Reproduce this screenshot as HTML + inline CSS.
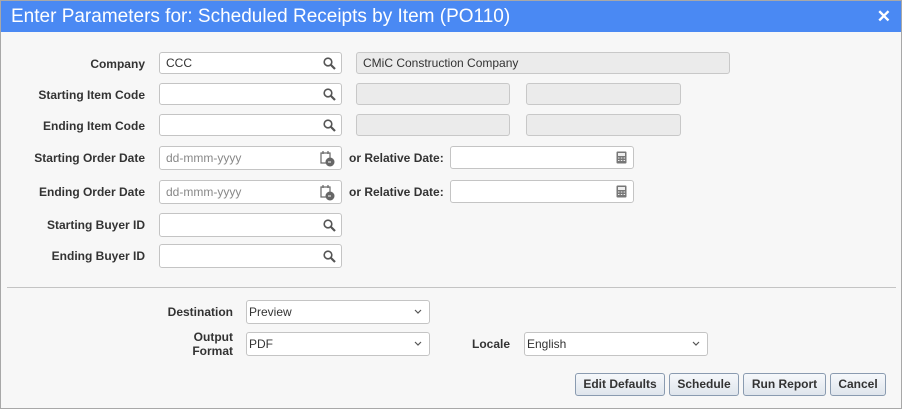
<!DOCTYPE html><html><head><style>
body{margin:0;width:902px;height:409px;overflow:hidden;font-family:"Liberation Sans",Arial,sans-serif;font-size:12px;color:#333}
.win{position:absolute;left:0;top:0;width:900px;height:407px;border:1px solid #a8a8a8;background:#f7f7f7}
.tb{position:absolute;left:0;top:0;width:900px;height:31px;background:#4a89f3;color:#fff;font-size:19px;line-height:31px;padding-left:10px;box-sizing:border-box}
.x{position:absolute;right:10px;top:0;font-size:17px;font-weight:bold}
.a{position:absolute}
.l{position:absolute;font-weight:bold;text-align:right;width:144px;left:0}
.i{position:absolute;height:22px;background:#fff;border:1px solid #c4c4c4;border-radius:3px;box-sizing:border-box;padding-left:6px;line-height:20px}
.g{background:#ebebeb;border-color:#c8c8c8}
.ph{color:#888}
.ic{position:absolute;right:5px;top:4px}
.b{position:absolute;top:372px;height:23px;border:1px solid #8a9bb0;border-radius:3px;background:linear-gradient(#f6f8fb,#dfe5ec);font-weight:bold;font-size:12px;text-align:center;line-height:21px;box-sizing:border-box}
.ch{position:absolute;right:7px;top:8px}
</style></head><body><div class="win">
<div class="tb">Enter Parameters for: Scheduled Receipts by Item (PO110)<span class="x">✕</span></div>
<svg width="0" height="0" style="position:absolute"><defs><g id="mg"><circle cx="5" cy="5" r="3.8" fill="none" stroke="#555" stroke-width="1.6"/><path d="M8 8l4 4" stroke="#555" stroke-width="2.2"/></g><g id="cal"><rect x="1" y="2" width="9" height="10" fill="none" stroke="#666" stroke-width="1.2"/><path d="M3 0v3M8 0v3" stroke="#666" stroke-width="1.2"/><circle cx="10" cy="11" r="4.5" fill="#666"/><path d="M8 11h3" stroke="#fff"/></g><g id="cc"><rect x="0.5" y="0.5" width="10" height="12" rx="1" fill="#777"/><rect x="2" y="2" width="7" height="3" fill="#eee"/><path d="M2 7h1.5M4.8 7h1.5M7.6 7h1.5M2 9.5h1.5M4.8 9.5h1.5M7.6 9.5h1.5" stroke="#eee"/></g><path id="chev" d="M1 1l3 3 3-3" fill="none" stroke="#555" stroke-width="1.2"/></defs></svg>
<div class="l" style="top:56px">Company</div>
<div class="i" style="left:158px;top:51px;width:183px">CCC<svg class="ic" width="13" height="13"><use href="#mg"/></svg></div>
<div class="i g" style="left:355px;top:51px;width:374px">CMiC Construction Company</div>
<div class="l" style="top:87px">Starting Item Code</div>
<div class="i" style="left:158px;top:82px;width:183px"><svg class="ic" width="13" height="13"><use href="#mg"/></svg></div>
<div class="i g" style="left:355px;top:82px;width:154px"></div><div class="i g" style="left:525px;top:82px;width:155px"></div>
<div class="l" style="top:118px">Ending Item Code</div>
<div class="i" style="left:158px;top:113px;width:183px"><svg class="ic" width="13" height="13"><use href="#mg"/></svg></div>
<div class="i g" style="left:355px;top:113px;width:154px"></div><div class="i g" style="left:525px;top:113px;width:155px"></div>
<div class="l" style="top:150px">Starting Order Date</div>
<div class="i ph" style="left:158px;top:145px;width:183px;height:24px;line-height:22px">dd-mmm-yyyy<svg class="ic" width="16" height="16" style="top:4px"><use href="#cal"/></svg></div>
<div class="a" style="left:348px;top:150px;font-weight:bold">or Relative Date:</div>
<div class="i" style="left:449px;top:145px;width:184px;height:23px"><svg class="ic" width="12" height="14"><use href="#cc"/></svg></div>
<div class="l" style="top:184px">Ending Order Date</div>
<div class="i ph" style="left:158px;top:179px;width:183px;height:24px;line-height:22px">dd-mmm-yyyy<svg class="ic" width="16" height="16" style="top:4px"><use href="#cal"/></svg></div>
<div class="a" style="left:348px;top:184px;font-weight:bold">or Relative Date:</div>
<div class="i" style="left:449px;top:179px;width:184px;height:23px"><svg class="ic" width="12" height="14"><use href="#cc"/></svg></div>
<div class="l" style="top:217px">Starting Buyer ID</div>
<div class="i" style="left:158px;top:212px;width:183px;height:24px"><svg class="ic" width="13" height="13" style="top:5px"><use href="#mg"/></svg></div>
<div class="l" style="top:248px">Ending Buyer ID</div>
<div class="i" style="left:158px;top:243px;width:183px;height:24px"><svg class="ic" width="13" height="13" style="top:5px"><use href="#mg"/></svg></div>
<div class="a" style="left:6px;top:286px;width:889px;height:1px;background:#c4c4c4"></div>
<div class="a" style="left:150px;top:304px;width:82px;text-align:right;font-weight:bold">Destination</div>
<div class="i" style="left:245px;top:299px;width:184px;height:24px;line-height:22px;padding-left:2px">Preview<svg class="ch" width="8" height="6"><use href="#chev"/></svg></div>
<div class="a" style="left:150px;top:329px;width:82px;text-align:right;font-weight:bold;line-height:14px">Output<br>Format</div>
<div class="i" style="left:245px;top:331px;width:184px;height:24px;line-height:22px;padding-left:2px">PDF<svg class="ch" width="8" height="6"><use href="#chev"/></svg></div>
<div class="a" style="left:471px;top:336px;font-weight:bold">Locale</div>
<div class="i" style="left:523px;top:331px;width:184px;height:24px;line-height:22px;padding-left:2px">English<svg class="ch" width="8" height="6"><use href="#chev"/></svg></div>
<div class="b" style="left:574px;width:90px">Edit Defaults</div>
<div class="b" style="left:668px;width:70px">Schedule</div>
<div class="b" style="left:742px;width:83px">Run Report</div>
<div class="b" style="left:829px;width:56px">Cancel</div>
</div></body></html>
